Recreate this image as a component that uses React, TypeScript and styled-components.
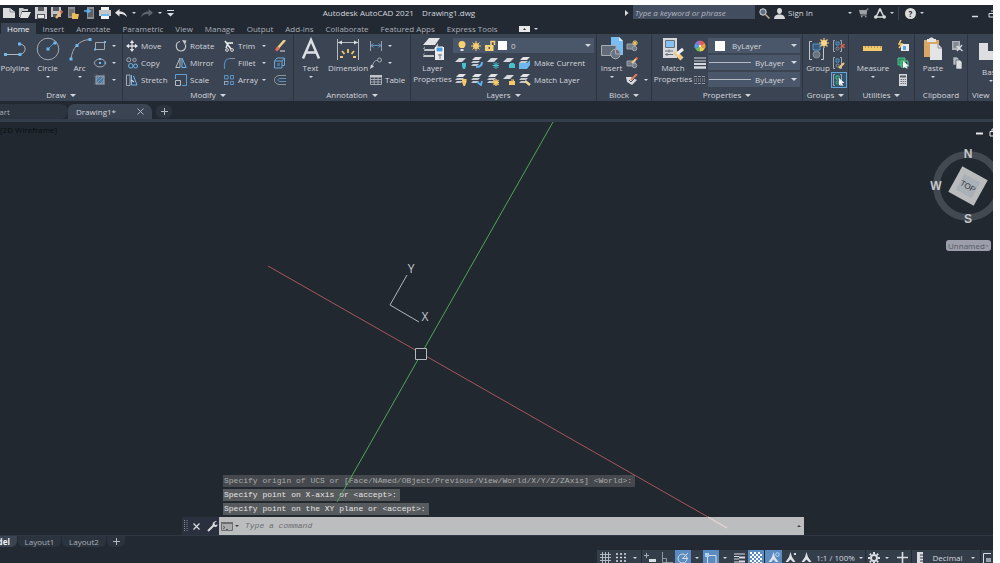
import React from "react";
import styled, { createGlobalStyle, css } from "styled-components";

const c = {
  chrome: "#222933",
  ribbon: "#3b4453",
  edge: "#2d3542",
  field: "#4a566a",
  canvas: "#212830",
  text: "#d3d7dd",
  dim: "#a9afb8",
  icon: "#d9dce0",
  blue: "#6cb8ef",
  yellow: "#f5c96a",
};

const GlobalStyle = createGlobalStyle`
  * { box-sizing: border-box; }
  body { margin: 0; background: #fff; }
  button, input, select { font: inherit; color: inherit; border: 0; margin: 0; padding: 0; background: none; border-radius: 0; outline: 0; }
  svg { display: block; flex: none; }
`;

const Page = styled.div`
  display: flex;
  min-height: 100vh;
  padding: 5px 7px 0 0;
  font: 8px/12px "Open Sans", "Noto Sans", sans-serif;
  color: ${c.text};
`;

const Window = styled.div`
  display: flex;
  flex-direction: column;
  flex: 1;
  min-width: 0;
  overflow: hidden;
  background: ${c.chrome};
`;

/* ---------- icons ---------- */

const Svg = ({ w = 12, h, vb, children }: { w?: number; h?: number; vb?: string; children: React.ReactNode }) => (
  <svg width={w} height={h ?? w} viewBox={vb ?? `0 0 ${w} ${h ?? w}`} fill="none" stroke={c.icon} strokeWidth="1" aria-hidden="true">
    {children}
  </svg>
);

const CaretSvg = styled.svg<{ $up?: boolean }>`
  ${(p) => p.$up && css`transform: rotate(180deg);`}
`;
const Caret = ({ size = 3, up }: { size?: number; up?: boolean }) => (
  <CaretSvg $up={up} width={size * 2} height={size} viewBox="0 0 6 3" aria-hidden="true">
    <path d="M0 0H6L3 3Z" fill="currentColor" />
  </CaretSvg>
);

const NewIcon = () => (
  <Svg>
    <path d="M0 1H7L12 5V11H0Z" fill="#dcdcdc" stroke="none" />
    <path d="M7 1V5H12" stroke="#8d9096" />
  </Svg>
);
const OpenIcon = () => (
  <Svg>
    <path d="M0 1H4L5 2H9V4H3L1 10H0Z" fill="#c9cacc" stroke="none" />
    <path d="M3 5H12L9 11H1Z" fill="#e2e2e2" stroke="none" />
  </Svg>
);
const SaveIcon = () => (
  <Svg>
    <path d="M0 0H12V12H0Z" fill="#cfd0d2" stroke="none" />
    <path d="M3 0H9V4H3ZM2 7H10V12H2Z" fill="#53585f" stroke="none" />
    <path d="M3 8H9V11H3Z" fill="#e8e8e8" stroke="none" />
  </Svg>
);
const SaveAsIcon = () => (
  <Svg>
    <path d="M0 0H10V10H0Z" fill="#bfc1c4" stroke="none" />
    <path d="M2 0H8V4H2ZM2 7H6V10H2Z" fill="#53585f" stroke="none" />
    <path d="M5 11L11 4" stroke="#eebc72" strokeWidth="2.4" />
    <path d="M9.500 5.500L11 4" stroke="#e05b4b" strokeWidth="2.4" />
  </Svg>
);
const DeviceOpenIcon = () => (
  <Svg>
    <path d="M1 0H8V11H1Z" fill="#8b8d90" stroke="none" />
    <path d="M2 2H7V9H2Z" fill="#6d6f73" stroke="none" />
    <path d="M5 6H8L9 7H12L11 12H5Z" fill="#eebc55" stroke="none" />
  </Svg>
);
const DeviceSaveIcon = () => (
  <Svg>
    <path d="M4 0H11V12H4Z" fill="#8b8d90" stroke="none" />
    <path d="M5 2H10V10H5Z" fill="#5d6066" stroke="none" />
    <path d="M1 4H6M4 2L7 4L4 6" stroke="#5db3ef" strokeWidth="1.600" />
  </Svg>
);
const PrintIcon = () => (
  <Svg>
    <path d="M2 0H10V4H2Z" fill="#f3f3f3" stroke="none" />
    <path d="M0 3H12V9H0Z" fill="#c3c5c8" stroke="none" />
    <path d="M2 7H10V9H2Z" fill="#6cb8ef" stroke="none" />
    <path d="M2 9H10V12H2Z" fill="#f3f3f3" stroke="none" />
  </Svg>
);
const UndoIcon = () => (
  <Svg w={12} h={10}>
    <path d="M4.500 1V3.500C8 3.500 11 5 12 9C9.500 6.500 7.500 6 4.500 6V8.500L0 4.800Z" fill="#e4e4e4" stroke="none" />
  </Svg>
);
const RedoIcon = () => (
  <Svg w={12} h={10}>
    <path d="M7.500 1V3.500C4 3.500 1 5 0 9C2.500 6.500 4.500 6 7.500 6V8.500L12 4.800Z" fill="#5d646f" stroke="none" />
  </Svg>
);
const CustomizeIcon = () => (
  <Svg w={7} h={7}>
    <path d="M0 .5H7" />
    <path d="M0 3H7L3.500 6.500Z" fill={c.icon} stroke="none" />
  </Svg>
);
const SearchIcon = () => (
  <Svg w={11}>
    <circle cx="4" cy="4" r="3.200" fill="#5f6e80" />
    <path d="M6.500 6.500L10.500 10.500" strokeWidth="1.500" stroke="#c2a98d" />
  </Svg>
);
const UserIcon = () => (
  <Svg w={11}>
    <path d="M5.500 0C7.500 0 8 1.500 8 3S7 6 5.500 6S3 4.500 3 3S3.500 0 5.500 0ZM0 11C0 8 2 7 4 6.500H7C9 7 11 8 11 11Z" fill="#d9d9d9" stroke="none" />
  </Svg>
);
const CartIcon = () => (
  <Svg w={10}>
    <path d="M9.500 1H8L7 7H1.500" stroke="#9da1a7" />
    <path d="M0 2H7.500L7 6H1Z" fill="#9da1a7" stroke="none" />
    <path d="M2 8.500H3.500M6 8.500H7.500" strokeWidth="1.500" stroke="#9da1a7" />
  </Svg>
);
const AutodeskIcon = () => (
  <Svg w={12} h={11}>
    <path d="M6 1L10 9H2Z" strokeWidth="1.500" />
    <circle cx="6" cy="2" r="1.500" fill={c.icon} stroke="none" />
    <circle cx="1.700" cy="9" r="1.700" fill={c.icon} stroke="none" />
    <circle cx="10.300" cy="9" r="1.700" fill={c.icon} stroke="none" />
  </Svg>
);

const PolylineIcon = () => (
  <Svg w={24}>
    <path d="M2 17.500H17C24 16 24 7 16 7" stroke="#b4b8bf" />
    <path d="M1 16h3v3H1ZM15.500 16h3v3h-3ZM15 5.500h3v3h-3Z" fill={c.blue} stroke="none" />
  </Svg>
);
const CircleIcon = () => (
  <Svg w={24}>
    <circle cx="12" cy="12" r="10.800" stroke="#a4a9b1" />
    <path d="M12 12L19 5" stroke="#4f9bd8" />
    <path d="M10.500 10.500h3v3h-3ZM17.500 4.500h3v3h-3Z" fill={c.blue} stroke="none" />
  </Svg>
);
const ArcIcon = () => (
  <Svg w={24}>
    <path d="M3 22C4 12 10 3 22 2.500" stroke="#a4a9b1" />
    <path d="M1.500 20.500h3v3h-3ZM7.500 7h3v3h-3ZM20.500 1h3v3h-3Z" fill={c.blue} stroke="none" />
  </Svg>
);
const RectIcon = () => (
  <Svg>
    <path d="M1.500 2.500H10.500V9.500H1.500Z" stroke="#a4a9b1" />
    <path d="M0 8.500h2v2H0ZM10 1h2v2h-2Z" fill={c.blue} stroke="none" />
  </Svg>
);
const EllipseIcon = () => (
  <Svg>
    <ellipse cx="6" cy="6" rx="5.500" ry="4" stroke="#a4a9b1" />
    <path d="M5 5h2v2H5ZM10.500 5h1.500v2h-1.500ZM5 1h2v2H5Z" fill={c.blue} stroke="none" />
  </Svg>
);
const HatchIcon = () => (
  <Svg>
    <path d="M2 2H10V10H2Z" fill="#53779b" stroke="#a4a9b1" />
    <path d="M2 6L6 2M2 10L10 2M6 10L10 6" stroke="#7fa9cf" strokeWidth=".7" />
    <path d="M0 2H12M0 10H12M2 0V12M10 0V12" stroke="#8b919a" strokeWidth=".6" strokeDasharray="1 1" />
  </Svg>
);
const MoveIcon = () => (
  <Svg>
    <path d="M6 2V10M2 6H10" strokeWidth="1.300" />
    <path d="M6 0L8.200 3H3.800ZM6 12L8.200 9H3.800ZM0 6L3 3.800V8.200ZM12 6L9 3.800V8.200Z" fill="#e4e6e9" stroke="none" />
  </Svg>
);
const CopyIcon = () => (
  <Svg>
    <circle cx="2.800" cy="2.800" r="2" stroke="#a4a9b1" />
    <circle cx="8.500" cy="3" r="1.700" stroke="#a4a9b1" />
    <circle cx="4.800" cy="8.800" r="2.300" stroke={c.blue} />
    <circle cx="9.500" cy="9" r="2" stroke={c.blue} />
  </Svg>
);
const StretchIcon = () => (
  <Svg>
    <path d="M.5 1V11.500H4V1Z" stroke="#a4a9b1" />
    <path d="M5.500 1V11H11L7.500 2" stroke={c.blue} />
    <path d="M5 6L8 8" strokeWidth="1.200" />
  </Svg>
);
const RotateIcon = () => (
  <Svg>
    <path d="M5 1.500C0 2.500 0 10 5.500 11C9 11 11.500 8.500 10.500 4.500" stroke="#c3c6cb" strokeWidth="1.200" />
    <path d="M7 0L11.500 .5L10 5Z" fill="#c3c6cb" stroke="none" />
  </Svg>
);
const MirrorIcon = () => (
  <Svg>
    <path d="M5 1V10.500H.8Z" stroke="#b6bac1" />
    <path d="M7 1V10.500H11.200Z" stroke={c.blue} />
  </Svg>
);
const ScaleIcon = () => (
  <Svg>
    <path d="M.5 5V.5H11.500V11.500H7" stroke="#5b9fd4" />
    <path d="M.5 6.500H5.500V11.500H.5Z" stroke="#b6bac1" />
  </Svg>
);
const TrimIcon = () => (
  <Svg>
    <path d="M2 1L8 9M10 3H5L3 8" strokeWidth="1.600" stroke="#e8eaec" />
    <circle cx="4" cy="10" r="1.400" />
    <circle cx="9" cy="10" r="1.400" />
    <path d="M7 3.500H11" strokeDasharray="1 1" />
  </Svg>
);
const FilletIcon = () => (
  <Svg>
    <path d="M1.500 12V7C2 3 4 1.500 7 1.500" stroke="#4f8cc0" strokeWidth="1.200" />
    <path d="M7 1.500H12" stroke="#8e949d" />
  </Svg>
);
const ArrayIcon = () => (
  <Svg>
    <path d="M1.500 1.500h3.500v3.500H1.500ZM7.500 1.500h3v3.500h-3ZM1.500 7.500h3.500v3H1.500ZM7.500 7.500h3v3h-3Z" stroke="#5d94c6" />
    <path d="M1 7.500h4.500M1.500 7v4" stroke="#9aa6b5" />
  </Svg>
);
const EraseIcon = () => (
  <Svg>
    <path d="M3 9L11 0" stroke="#f1d08e" strokeWidth="2.500" />
    <path d="M2 10.500L5 7.500" stroke="#e4685a" strokeWidth="3" />
    <path d="M6 11H11" stroke="#dfe2e5" />
  </Svg>
);
const ExplodeIcon = () => (
  <Svg>
    <path d="M.5 4H8V11H.5ZM3 1H10.500V8.500H8M.5 4L3 1M8 4L10.500 1" stroke="#6fa6d6" />
    <path d="M3 6H6V9H3Z" fill="#4a7099" stroke="none" />
  </Svg>
);
const OffsetIcon = () => (
  <Svg>
    <path d="M12 1.500H5C-1 2 -1 10 5 10.500H12" stroke="#8e949d" />
    <path d="M12 4.500H6C3.500 4.500 3.500 7.500 6 7.500H12" stroke="#5d94c6" />
  </Svg>
);
const TextIcon = () => (
  <Svg w={24}>
    <path d="M4 21.500L12 3L20 21.500M7 15.500H17" stroke="#dcdfe3" strokeWidth="2.500" />
  </Svg>
);
const DimensionIcon = () => (
  <Svg w={24}>
    <path d="M1.500 2V23M22.500 2V23M2 5.500H22" stroke="#b4b8bf" />
    <path d="M2 5.500L6 3.500V7.500ZM22 5.500L18 3.500V7.500Z" fill="#d9dce0" stroke="none" />
    <path d="M12 16V12M8.500 17L6 14M15.500 17L18 14M7 20H4M17 20H20" stroke={c.yellow} strokeWidth="1.800" />
  </Svg>
);
const LinearIcon = () => (
  <Svg>
    <path d="M.5 1V11M11.500 1V11" stroke="#9aa1ab" />
    <path d="M1 5.500H11M3.500 3.500L1 5.500L3.500 7.500M8.500 3.500L11 5.500L8.500 7.500" stroke="#5d94c6" />
  </Svg>
);
const LeaderIcon = () => (
  <Svg>
    <circle cx="9.500" cy="3" r="2" stroke="#a4a9b1" />
    <path d="M7.500 3.500C4 3 4 6 2 9" stroke="#a4a9b1" />
    <path d="M0 12L1 7.500L4 9.500Z" fill="#cfd2d6" stroke="none" />
  </Svg>
);
const TableIcon = () => (
  <Svg>
    <path d="M0 1H12V3.500H0Z" fill="#c3c6cb" stroke="none" />
    <path d="M.5 3V10.500H11.500V3M0 5.500H12M0 8H12M4.200 3V11M8 3V11" stroke="#a4a9b1" />
  </Svg>
);

const stack = (
  <>
    <path d="M4 0H11L8 3H1Z" fill="#e1e3e5" stroke="none" />
    <path d="M2 4H9L7 6H0ZM2 7H8L6 9H0Z" fill="#c5c8cc" stroke="none" />
  </>
);
const LayerIcon = () => (
  <Svg w={24}>
    <path d="M8 1H19L14 8H2Z" fill="#e1e3e5" stroke="none" />
    <path d="M4 9L2 12H13L17 6V9L13 14H3ZM4 15L2 18H13V20H2Z" fill="#c3c6ca" stroke="none" />
    <path d="M14 10H23V23H14Z" fill="#e8eaec" stroke="none" />
    <path d="M15 10H22V15H15Z" fill="#4c9be0" stroke="#fff" />
    <path d="M17 18H21M19 17V22" stroke="#777d86" />
  </Svg>
);
const LayerToolIcon = ({ kind }: { kind: string }) => (
  <Svg>
    {["off", "freeze", "lock", "unlock"].includes(kind) ? <path d="M4 1H11L7 5H0Z" fill="#d5d8db" stroke="none" /> : stack}
    {kind === "off" && <path d="M7 6H11V9L10 12H8L7 9Z" fill="#46c1cd" stroke="none" />}
    {kind === "freeze" && <path d="M9 5V12M5.500 8.500H12M6.500 6L11.500 11M11.500 6L6.500 11" stroke="#46c1cd" />}
    {kind === "lock" && <path d="M7 7V6H11V7H12V11H6V7Z" fill="#46c1cd" stroke="none" />}
    {kind === "unlock" && <path d="M8 5.500H11V7H12V11H6V7H10V6.500H8Z" fill={c.yellow} stroke="none" />}
    {kind === "on" && <path d="M7 5H11.500V8L10 12H8.500L7 8Z" fill={c.yellow} stroke="none" />}
    {kind === "thaw" && <path d="M9 5V12M5.500 8.500H12M6.500 6L11.500 11M11.500 6L6.500 11" stroke={c.yellow} strokeWidth="1.300" />}
    {kind === "iso" && <path d="M5 10C9 10 11 8 11 5" stroke="#5fb0ee" strokeWidth="2" />}
    {kind === "walk" && <path d="M6 8L10 11L11 7" stroke="#5fb0ee" strokeWidth="1.800" />}
    {kind === "current" && <path d="M0 6H8L11 3V8L8 12H0Z" fill="#6cb8ef" stroke="none" />}
    {kind === "match" && <path d="M6 7L11 11" stroke="#f0d49a" strokeWidth="2.500" />}
  </Svg>
);
const BulbIcon = () => (
  <Svg>
    <path d="M6 1C8.500 1 9.500 2.500 9.500 4.500S8 7 8 8H4C4 7 2.500 6.500 2.500 4.500S3.500 1 6 1Z" fill="#f8d271" stroke="none" />
    <path d="M4.500 9H7.500V11H4.500Z" fill="#dfe3e8" stroke="none" />
  </Svg>
);
const SunIcon = () => (
  <Svg>
    <circle cx="6" cy="6" r="3" fill="#f8d271" stroke="none" />
    <path d="M6 1V11M1 6H11M2.500 2.500L9.500 9.500M9.500 2.500L2.500 9.500" stroke={c.yellow} />
  </Svg>
);
const UnlockIcon = () => (
  <Svg>
    <path d="M7 5V1.500H10.500V5" stroke="#f8d271" strokeWidth="1.500" />
    <path d="M1 5H9.500V11H1Z" fill="#f8d271" stroke="none" />
    <path d="M4.500 7H6V9H4.500Z" fill="#4a566a" stroke="none" />
  </Svg>
);
const InsertIcon = () => (
  <Svg w={24}>
    <path d="M11 0H19L23 4V18H11Z" fill="#79bdf2" stroke="none" />
    <path d="M19 0V4H23" fill="#d5e9f9" stroke="none" />
    <path d="M1.500 8.500H16V18.500H1.500Z" fill="#626b78" stroke="#a8adb5" />
    <circle cx="15.500" cy="17" r="4.800" fill="#69727f" stroke="#a8adb5" />
    <path d="M15.500 12.500V17H20" stroke="#a8adb5" />
  </Svg>
);
const BlockToolIcon = ({ kind }: { kind: string }) => (
  <Svg>
    {kind === "attr" ? (
      <>
        <path d="M0 3H5L11 6L6 11L1 8Z" fill="#d8dadd" stroke="none" />
        <path d="M5 6L11 0" stroke="#e37a62" strokeWidth="2" />
        <path d="M3 6L5 8L9 4" stroke="#4c5563" />
      </>
    ) : (
      <>
        <path d="M1 4H9V9H1Z" fill="#767e8a" stroke="#9ba1aa" />
        <circle cx="8.500" cy="8.500" r="2.300" fill="#737b87" stroke="#9ba1aa" />
        {kind === "create" ? (
          <path d="M9 0V6M6 3H12M7 1L11 5M11 1L7 5" stroke={c.yellow} />
        ) : (
          <>
            <path d="M6 6L11 1" stroke="#efc981" strokeWidth="2" />
            <path d="M10 2L11.500 .5" stroke="#e05b4b" strokeWidth="2" />
          </>
        )}
      </>
    )}
  </Svg>
);
const MatchIcon = () => (
  <Svg w={24}>
    <path d="M2 1H16V21H2Z" fill="#d7d9dc" stroke="none" />
    <path d="M4.500 3.500H13.500V10.500H4.500Z" fill="#86c2f2" stroke="#6a7079" />
    <path d="M4 14H12M4 17.500H12M8 12.500V15.500M6 16V19" stroke="#6a7079" />
    <path d="M14 15L21 22" stroke="#f0cb85" strokeWidth="4.500" />
    <path d="M16 17L22 12" stroke="#eceef0" strokeWidth="3" />
  </Svg>
);
const ColorWheelIcon = () => (
  <Svg>
    {["#e9604f", "#f19a3e", "#f2d14b", "#6ac069", "#4aa3e0", "#9a6fd0"].map((fill, i) => (
      <path key={fill} d="M6 6L3.200 1.200A5.600 5.600 0 0 1 8.800 1.200Z" fill={fill} stroke="none" transform={`rotate(${i * 60 + 30} 6 6)`} />
    ))}
    <circle cx="6" cy="6" r="1.200" fill="#e8e8e8" stroke="none" />
  </Svg>
);
const WeightIcon = () => (
  <Svg>
    <path d="M0 1H12M0 4H12" stroke="#d5d8dc" />
    <path d="M0 7H12" stroke="#d5d8dc" strokeWidth="2" />
    <path d="M0 10.500H12" stroke="#d5d8dc" strokeWidth="2.500" />
  </Svg>
);
const LinetypeIcon = () => (
  <Svg>
    <path d="M0 2.500H12M0 9.500H12" strokeDasharray="3 1" stroke="#9197a1" />
    <path d="M0 5H12M0 7H12" strokeDasharray="1 1" stroke="#9197a1" />
  </Svg>
);
const GroupIcon = () => (
  <Svg w={24}>
    <path d="M6 4.500H3.500V22.500H6M15 22.500H17.500V11" stroke="#c3c6cb" />
    <path d="M7 7H14V13H7Z" stroke="#4f9bd8" fill="#3c5878" />
    <circle cx="10.500" cy="17.500" r="3.500" fill="#69727f" stroke="#8e949d" />
    <path d="M18 1V11M13 6H23M14.500 2.500L21.500 9.500M21.500 2.500L14.500 9.500" stroke="#f2cc7d" strokeWidth="1.200" />
    <circle cx="18" cy="6" r="3" fill="#f8d68a" stroke="none" />
  </Svg>
);
const GroupToolIcon = ({ kind }: { kind: string }) => (
  <Svg>
    <path d="M2 .5H.5V11.500H2M7 .5H8.500V11.500H7" stroke="#a4a9b1" />
    <path d="M3 2H6V5H3Z" stroke={kind === "select" ? "#4fbf86" : "#4f9bd8"} />
    <circle cx="4.500" cy="8.500" r="1.500" stroke={kind === "select" ? "#4fbf86" : "#8e949d"} />
    {kind === "ungroup" && <path d="M7.500 4L11.500 8M11.500 4L7.500 8" stroke="#e2604f" strokeWidth="1.400" />}
    {kind === "edit" && <path d="M6 11L11 6" stroke="#efc981" strokeWidth="2" />}
    {kind === "select" && <path d="M6 4L11.500 9L9 9L10.500 12L7.500 10.500L6 11.500Z" fill="#f4f5f6" stroke="none" />}
  </Svg>
);
const MeasureIcon = () => (
  <Svg w={24}>
    <path d="M2 9H21V14H2Z" fill="#f2ca6b" stroke="none" />
    <path d="M4.500 9V11M7.500 9V11M10.500 9V11M13.500 9V11M16.500 9V11M19.500 9V11" stroke="#b3965a" />
  </Svg>
);
const QuickSelectIcon = () => (
  <Svg>
    <path d="M4 4H12V11H4Z" fill="#e7e9eb" stroke="none" />
    <path d="M6 6H9V10H6Z" fill="#5aa6e6" stroke="none" />
    <path d="M4 0L2 4H5L2 8" stroke={c.yellow} strokeWidth="1.500" />
  </Svg>
);
const SelectAllIcon = () => (
  <Svg>
    <path d="M1 1H8V8H1Z" fill="#2f8f62" stroke="#4fbf86" />
    <path d="M4 4H11V10H4Z" stroke="#5fd096" />
    <path d="M6 4L12 9H9.500L10.500 12L7.500 10L6 11Z" fill="#f4f5f6" stroke="none" />
  </Svg>
);
const CalculatorIcon = () => (
  <Svg>
    <path d="M2 0H10V12H2Z" fill="#d5d7da" stroke="none" />
    <path d="M3 1.500H9V3.500H3Z" fill="#535b67" stroke="none" />
    <path d="M3.500 5.500H9M3.500 7.500H9M3.500 9.500H9" stroke="#6a717c" strokeDasharray="1.500 .700" />
  </Svg>
);
const PasteIcon = () => (
  <Svg w={24}>
    <path d="M3 3H18V20H3Z" fill="#d8a666" stroke="none" />
    <path d="M6 2H8C9 0 12 0 13 2H15V5H6Z" fill="#e3e4e6" stroke="none" />
    <path d="M9 7H17L21 11V23H9Z" fill="#e3e4e6" stroke="none" />
    <path d="M17 7V11H21" stroke="#8d9096" />
  </Svg>
);
const CutIcon = () => (
  <Svg>
    <path d="M1 1H9V10H1Z" fill="#aeb2b8" stroke="none" />
    <path d="M2.500 3H7.500M2.500 5H7.500M2.500 7H5" stroke="#5a616c" />
    <path d="M6 11L11 5M6 6L11.500 11" strokeWidth="1.300" />
  </Svg>
);
const CopyClipIcon = () => (
  <Svg>
    <path d="M2 0H6L8 2V8H2Z" fill="#b6b9be" stroke="#3b4453" strokeWidth=".6" />
    <path d="M5 3H9L11 5V12H5Z" fill="#dcdee1" stroke="#3b4453" strokeWidth=".6" />
  </Svg>
);
const BaseIcon = () => (
  <Svg w={24} h={28}>
    <path d="M0 6H9V14H24V23H0Z" fill="#dcdee1" stroke="none" />
  </Svg>
);

/* ---------- title bar ---------- */

const TitleBar = styled.header`
  display: flex;
  align-items: center;
  height: 16px;
`;
const QuickAccess = styled.div`
  display: flex;
  align-items: center;
  gap: 4px;
  padding-left: 3px;
`;
const IconButton = styled.button<{ $w?: number }>`
  display: flex;
  align-items: center;
  justify-content: center;
  width: ${(p) => p.$w ?? 12}px;
  height: 14px;
`;
const Title = styled.h1`
  flex: 1;
  margin: 0;
  text-align: center;
  font-size: 8px;
  font-weight: 400;
  white-space: pre;
`;
const SearchField = styled.input`
  width: 122px;
  height: 14px;
  margin: 0 3px 2px 4px;
  padding: 0 2px;
  background: #434d60;
  font-style: italic;
  &::placeholder { color: #b4b9c2; opacity: 1; }
`;
const Account = styled.button`
  display: flex;
  align-items: center;
  gap: 3px;
  width: 78px;
  margin-left: 4px;
  margin-right: 2px;
  white-space: nowrap;
  & > :last-child { margin-left: auto; }
`;
const TitleTools = styled.div`
  display: flex;
  align-items: center;
  gap: 4px;
  width: 139px;
  padding-left: 4px;
`;
const Divider = styled.span`
  width: 1px;
  height: 13px;
  background: #3a424e;
`;
const Help = styled.button`
  width: 11px;
  height: 11px;
  margin-left: 2px;
  border-radius: 50%;
  background: #dcdcdc;
  color: #222933;
  font-weight: 700;
  line-height: 11px;
`;
const WindowButtons = styled.div`
  display: flex;
  align-items: center;
  gap: 10px;
  margin-left: auto;
  overflow: hidden;
`;

/* ---------- ribbon ---------- */

const RibbonTabs = styled.nav`
  display: flex;
  align-items: stretch;
  height: 13px;
  padding: 2px 0 0 1px;
`;
const RibbonTab = styled.button<{ $active?: boolean }>`
  padding: 0 6px;
  margin-right: ${(p) => (p.$active ? 1 : 0)}px;
  color: ${(p) => (p.$active ? "#f0f2f4" : c.dim)};
  background: ${(p) => (p.$active ? c.ribbon : "none")};
  line-height: 11px;
  white-space: nowrap;
`;
const RibbonToggle = styled.button`
  display: flex;
  align-items: center;
  gap: 4px;
  margin-left: 15px;
`;
const Ribbon = styled.div`
  display: flex;
  height: 67px;
  background: ${c.ribbon};
  overflow: hidden;
`;
const Panel = styled.section<{ $w: number }>`
  display: flex;
  flex-direction: column;
  flex: none;
  width: ${(p) => p.$w}px;
  padding-top: 3px;
  border-right: 1px solid ${c.edge};
  white-space: nowrap;
`;
const PanelBody = styled.div<{ $pad?: number; $gap?: number }>`
  display: flex;
  align-items: flex-start;
  gap: ${(p) => p.$gap ?? 0}px;
  height: 51px;
  padding-left: ${(p) => p.$pad ?? 3}px;
`;
const PanelFooter = styled.button<{ $start?: boolean }>`
  display: flex;
  align-items: center;
  justify-content: ${(p) => (p.$start ? "flex-start" : "center")};
  gap: 4px;
  height: 13px;
  padding: 1px 4px 0;
`;
const BigTool = styled.button<{ $w: number }>`
  display: flex;
  flex-direction: column;
  align-items: center;
  flex: none;
  width: ${(p) => p.$w}px;
  line-height: 11px;
  & > svg:first-child { margin-bottom: 1px; }
  & > svg:last-child:not(:first-child) { margin-top: 3px; }
`;
const Stack = styled.div<{ $w?: number; $indent?: boolean }>`
  display: flex;
  flex-direction: column;
  flex: none;
  width: ${(p) => (p.$w ? `${p.$w}px` : "auto")};
  padding-left: ${(p) => (p.$indent ? 8 : 0)}px;
`;
const Row = styled.div`
  display: flex;
  align-items: center;
  gap: 4px;
  height: 17px;
`;
const LayerRow = styled(Row)`
  padding-left: 2px;
`;
const PropertyRow = styled(Row)`
  gap: 2px;
`;
const FullRow = styled(Row)`
  & > button { flex: 1; }
`;
const Tool = styled.button<{ $active?: boolean }>`
  display: flex;
  align-items: center;
  gap: 3px;
  ${(p) =>
    p.$active &&
    css`
      margin: 0 -2px;
      padding: 1px;
      border: 1px solid #62a6dd;
      background: #35546f;
    `}
  & > svg + svg { margin-left: 3px; }
  & > span + svg { margin-left: auto; }
`;
const Combo = styled.label<{ $w: number }>`
  display: flex;
  align-items: center;
  gap: 2px;
  width: ${(p) => p.$w}px;
  height: 15px;
  padding: 0 3px;
  background: ${c.field};
  & > select { flex: 1; min-width: 0; padding-left: 2px; appearance: none; line-height: 12px; }
`;
const Swatch = styled.span`
  width: 10px;
  height: 10px;
  margin: 0 3px 0 4px;
  background: #fff;
`;
const Stroke = styled.span`
  width: 42px;
  height: 1px;
  margin-left: -2px;
  background: #b4bac4;
`;

type BigProps = { w: number; icon: React.ReactNode; label: string; sub?: string; caret?: boolean };
const Big = ({ w, icon, label, sub, caret }: BigProps) => (
  <BigTool $w={w}>
    {icon}
    <span>{label}</span>
    {sub && <span>{sub}</span>}
    {caret && <Caret size={2} />}
  </BigTool>
);
const Small = ({ icon, label, caret }: { icon: React.ReactNode; label?: string; caret?: boolean }) => (
  <Tool>
    {icon}
    {label && <span>{label}</span>}
    {caret && <Caret size={2} />}
  </Tool>
);
const Footer = ({ label, plain, start }: { label: string; plain?: boolean; start?: boolean }) => (
  <PanelFooter $start={start}>
    {label}
    {!plain && <Caret size={3} />}
  </PanelFooter>
);
const PropertyCombo = ({ name, mark }: { name: string; mark: React.ReactNode }) => (
  <Combo $w={92}>
    {mark}
    <select aria-label={name}><option>ByLayer</option></select>
    <Caret />
  </Combo>
);

/* ---------- document tabs ---------- */

const DocTabs = styled.nav`
  display: flex;
  align-items: flex-end;
  height: 21px;
  padding-top: 3px;
  border-bottom: 3px solid #343d4b;
`;
const DocTab = styled.button<{ $active?: boolean; $w: number }>`
  display: flex;
  align-items: center;
  justify-content: space-between;
  width: ${(p) => p.$w}px;
  height: 15px;
  padding: 0 8px;
  border-radius: 6px 8px 0 0;
  background: ${(p) => (p.$active ? c.ribbon : "#2c343f")};
  color: ${(p) => (p.$active ? c.text : c.dim)};
  &:first-child { margin-left: -16px; border-radius: 0 8px 8px 0; }
`;
const AddTab = styled.button`
  display: flex;
  align-items: center;
  justify-content: center;
  width: 16px;
  height: 13px;
  margin: 0 0 1px 4px;
  border-radius: 6px;
  background: #2c343f;
`;
const Plus = () => (
  <Svg w={7}>
    <path d="M3.500 0V7M0 3.500H7" stroke="#b4b8bf" />
  </Svg>
);

/* ---------- drawing area ---------- */

const Canvas = styled.main`
  position: relative;
  display: flex;
  flex-direction: column;
  justify-content: flex-end;
  flex: 1;
  min-height: 413px;
  background: ${c.canvas};
  overflow: hidden;
`;
const ViewLabel = styled.button`
  position: absolute;
  left: 0;
  top: 2px;
  color: #0c0f13;
`;
const Drawing = styled.svg`
  position: absolute;
  left: 0;
  top: 0;
  width: 100%;
  height: 100%;
  pointer-events: none;
`;
const ViewTools = styled.div`
  position: absolute;
  right: 0;
  top: 4px;
  display: flex;
  flex-direction: column;
  align-items: flex-end;
`;
const UcsMenu = styled.button`
  display: flex;
  align-items: center;
  justify-content: space-between;
  width: 45px;
  height: 11px;
  margin: 10px 2px 0 0;
  padding: 0 2px 0 2px;
  border-radius: 3px;
  background: #9c9eab;
  color: #555967;
  line-height: 10px;
  & > svg { opacity: 0.4; }
`;
const CommandArea = styled.div`
  display: flex;
  flex-direction: column;
  align-items: flex-start;
  gap: 2px;
  width: 622px;
  margin-left: 182px;
  font: 8px/12px "Liberation Mono", monospace;
`;
const History = styled.p<{ $old?: boolean }>`
  margin: 0 0 0 41px;
  padding: 0 3px 0 1px;
  background: ${(p) => (p.$old ? "#45494d" : "#585b5e")};
  color: ${(p) => (p.$old ? "#a9acaf" : "#e4e5e6")};
`;
const CommandRow = styled.div`
  display: flex;
  width: 100%;
  height: 18px;
`;
const CommandGrip = styled.div`
  display: flex;
  align-items: center;
  gap: 5px;
  width: 37px;
  padding-left: 2px;
  background: #2a303d;
`;
const CommandBox = styled.label`
  display: flex;
  align-items: center;
  gap: 2px;
  flex: 1;
  padding: 0 3px 0 2px;
  background: #bcbdbe;
  color: #3d4146;
`;
const CommandInput = styled.input`
  flex: 1;
  min-width: 0;
  padding-left: 4px;
  font-style: italic;
  &::placeholder { color: #6c6f73; opacity: 1; }
`;

/* ---------- bottom bars ---------- */

const LayoutTabs = styled.nav`
  display: flex;
  height: 15px;
  padding-bottom: 3px;
  border-top: 1px solid #2f3743;
`;
const LayoutTab = styled.button<{ $active?: boolean; $w: number }>`
  display: flex;
  align-items: center;
  justify-content: center;
  width: ${(p) => p.$w}px;
  margin-right: 1px;
  border-radius: 0 0 6px 6px;
  background: ${(p) => (p.$active ? c.ribbon : "#2b333e")};
  color: ${(p) => (p.$active ? "#f0f2f4" : c.dim)};
  font-weight: ${(p) => (p.$active ? 700 : 400)};
  line-height: 11px;
  &:first-child { margin-left: -20px; padding-right: 2px; }
`;
const StatusBar = styled.footer`
  display: flex;
  justify-content: flex-end;
  height: 13px;
  overflow: hidden;
`;
const StatusGroup = styled.div`
  display: flex;
  margin-left: 1px;
  background: #343d4a;
`;
const StatusButton = styled.button<{ $w: number; $active?: boolean }>`
  display: flex;
  align-items: center;
  justify-content: center;
  gap: 4px;
  width: ${(p) => p.$w}px;
  height: 15px;
  flex: none;
  background: ${(p) => (p.$active ? "#5a8cc2" : "none")};
  white-space: nowrap;
`;

const Person = () => <path d="M5.500 0L7 5L10.500 10H8L5.500 7.500L3 10H.5L4 5Z" fill="#dfe2e6" stroke="none" />;
const checks = [0, 1, 2, 3, 4, 5].flatMap((y) => [0, 1, 2, 3, 4, 5].filter((x) => (x + y) % 2 === 0).map((x) => [x, y]));
const tabs = ["Home", "Insert", "Annotate", "Parametric", "View", "Manage", "Output", "Add-ins", "Collaborate", "Featured Apps", "Express Tools"];

export default function App() {
  return (
    <>
      <GlobalStyle />
      <Page>
        <Window>
          <TitleBar>
            <QuickAccess>
              <IconButton aria-label="New"><NewIcon /></IconButton>
              <IconButton aria-label="Open"><OpenIcon /></IconButton>
              <IconButton aria-label="Save"><SaveIcon /></IconButton>
              <IconButton aria-label="Save As"><SaveAsIcon /></IconButton>
              <IconButton aria-label="Open from device"><DeviceOpenIcon /></IconButton>
              <IconButton aria-label="Save to device"><DeviceSaveIcon /></IconButton>
              <IconButton aria-label="Plot"><PrintIcon /></IconButton>
              <IconButton aria-label="Undo"><UndoIcon /></IconButton>
              <IconButton aria-label="Undo list" $w={6}><Caret size={2} /></IconButton>
              <IconButton aria-label="Redo"><RedoIcon /></IconButton>
              <IconButton aria-label="Redo list" $w={6}><Caret size={2} /></IconButton>
              <IconButton aria-label="Customize" $w={6}><CustomizeIcon /></IconButton>
            </QuickAccess>
            <Title>{"Autodesk AutoCAD 2021    Drawing1.dwg"}</Title>
            <Svg w={4} h={6}><path d="M0 0L3.500 3L0 6Z" fill={c.icon} stroke="none" /></Svg>
            <SearchField aria-label="Search" placeholder="Type a keyword or phrase" />
            <IconButton aria-label="Search"><SearchIcon /></IconButton>
            <Account><UserIcon /><span>Sign In</span><Caret size={2} /></Account>
            <TitleTools>
              <IconButton aria-label="Cart"><CartIcon /></IconButton>
              <IconButton aria-label="App store"><AutodeskIcon /></IconButton>
              <Caret size={2} />
              <Divider />
              <Help>?</Help>
              <Caret size={2} />
              <WindowButtons>
                <Svg w={6} h={10}><path d="M0 8.500H6" strokeWidth="1.500" /></Svg>
                <Svg w={5} h={10}><path d="M1 5.500H8V9H1ZM3 3H9" /></Svg>
              </WindowButtons>
            </TitleTools>
          </TitleBar>

          <RibbonTabs>
            {tabs.map((t, i) => (
              <RibbonTab key={t} $active={i === 0}>{t}</RibbonTab>
            ))}
            <RibbonToggle aria-label="Minimize ribbon">
              <Svg w={11} h={6}>
                <path d="M0 0H11V6H0Z" fill="#e8e8e8" stroke="none" />
                <path d="M4 4L5.500 2L7 4Z" fill="#333" stroke="none" />
              </Svg>
              <Caret size={2} />
            </RibbonToggle>
          </RibbonTabs>

          <Ribbon>
            <Panel $w={123}>
              <PanelBody $pad={0}>
                <Big w={30} icon={<PolylineIcon />} label="Polyline" />
                <Big w={35} icon={<CircleIcon />} label="Circle" caret />
                <Big w={29} icon={<ArcIcon />} label="Arc" caret />
                <Stack>
                  <Row><Small icon={<RectIcon />} caret /></Row>
                  <Row><Small icon={<EllipseIcon />} caret /></Row>
                  <Row><Small icon={<HatchIcon />} caret /></Row>
                </Stack>
              </PanelBody>
              <Footer label="Draw" />
            </Panel>
            <Panel $w={171}>
              <PanelBody>
                <Stack $w={49}>
                  <Row><Small icon={<MoveIcon />} label="Move" /></Row>
                  <Row><Small icon={<CopyIcon />} label="Copy" /></Row>
                  <Row><Small icon={<StretchIcon />} label="Stretch" /></Row>
                </Stack>
                <Stack $w={48}>
                  <Row><Small icon={<RotateIcon />} label="Rotate" /></Row>
                  <Row><Small icon={<MirrorIcon />} label="Mirror" /></Row>
                  <Row><Small icon={<ScaleIcon />} label="Scale" /></Row>
                </Stack>
                <Stack $w={43}>
                  <FullRow><Small icon={<TrimIcon />} label="Trim" caret /></FullRow>
                  <FullRow><Small icon={<FilletIcon />} label="Fillet" caret /></FullRow>
                  <FullRow><Small icon={<ArrayIcon />} label="Array" caret /></FullRow>
                </Stack>
                <Stack $indent>
                  <Row><Small icon={<EraseIcon />} /></Row>
                  <Row><Small icon={<ExplodeIcon />} /></Row>
                  <Row><Small icon={<OffsetIcon />} /></Row>
                </Stack>
              </PanelBody>
              <Footer label="Modify" />
            </Panel>
            <Panel $w={117}>
              <PanelBody $pad={1}>
                <Big w={31} icon={<TextIcon />} label="Text" caret />
                <Big w={44} icon={<DimensionIcon />} label="Dimension" />
                <Stack>
                  <Row><Small icon={<LinearIcon />} caret /></Row>
                  <Row><Small icon={<LeaderIcon />} caret /></Row>
                  <Row><Small icon={<TableIcon />} label="Table" /></Row>
                </Stack>
              </PanelBody>
              <Footer label="Annotation" />
            </Panel>
            <Panel $w={186}>
              <PanelBody $pad={2} $gap={1}>
                <Big w={39} icon={<LayerIcon />} label="Layer" sub="Properties" />
                <Stack $w={141}>
                  <Row>
                    <Combo $w={141}>
                      <BulbIcon /><SunIcon /><UnlockIcon />
                      <Svg w={9}><path d="M0 0H9V9H0Z" fill="#fff" stroke="none" /></Svg>
                      <select aria-label="Layer"><option>0</option></select>
                      <Caret />
                    </Combo>
                  </Row>
                  <LayerRow>
                    {["off", "iso", "freeze", "lock"].map((k) => <Small key={k} icon={<LayerToolIcon kind={k} />} />)}
                    <Small icon={<LayerToolIcon kind="current" />} label="Make Current" />
                  </LayerRow>
                  <LayerRow>
                    {["on", "walk", "thaw", "unlock"].map((k) => <Small key={k} icon={<LayerToolIcon kind={k} />} />)}
                    <Small icon={<LayerToolIcon kind="match" />} label="Match Layer" />
                  </LayerRow>
                </Stack>
              </PanelBody>
              <Footer label="Layers" />
            </Panel>
            <Panel $w={55}>
              <PanelBody $pad={0}>
                <Big w={29} icon={<InsertIcon />} label="Insert" caret />
                <Stack>
                  <Row><Small icon={<BlockToolIcon kind="create" />} /></Row>
                  <Row><Small icon={<BlockToolIcon kind="edit" />} /></Row>
                  <Row><Small icon={<BlockToolIcon kind="attr" />} caret /></Row>
                </Stack>
              </PanelBody>
              <Footer label="Block" />
            </Panel>
            <Panel $w={151}>
              <PanelBody $pad={1} $gap={1}>
                <Big w={40} icon={<MatchIcon />} label="Match" sub="Properties" />
                <Stack>
                  <PropertyRow><ColorWheelIcon /><PropertyCombo name="Color" mark={<Swatch />} /></PropertyRow>
                  <PropertyRow><WeightIcon /><PropertyCombo name="Lineweight" mark={<Stroke />} /></PropertyRow>
                  <PropertyRow><LinetypeIcon /><PropertyCombo name="Linetype" mark={<Stroke />} /></PropertyRow>
                </Stack>
              </PanelBody>
              <Footer label="Properties" />
            </Panel>
            <Panel $w={46}>
              <PanelBody $pad={1} $gap={1}>
                <Big w={28} icon={<GroupIcon />} label="Group" />
                <Stack>
                  <Row><Small icon={<GroupToolIcon kind="ungroup" />} /></Row>
                  <Row><Small icon={<GroupToolIcon kind="edit" />} /></Row>
                  <Row><Tool $active aria-label="Group selection"><GroupToolIcon kind="select" /></Tool></Row>
                </Stack>
              </PanelBody>
              <Footer label="Groups" />
            </Panel>
            <Panel $w={66}>
              <PanelBody $gap={3}>
                <Big w={42} icon={<MeasureIcon />} label="Measure" caret />
                <Stack>
                  <Row><Small icon={<QuickSelectIcon />} /></Row>
                  <Row><Small icon={<SelectAllIcon />} /></Row>
                  <Row><Small icon={<CalculatorIcon />} /></Row>
                </Stack>
              </PanelBody>
              <Footer label="Utilities" />
            </Panel>
            <Panel $w={53}>
              <PanelBody $gap={3}>
                <Big w={30} icon={<PasteIcon />} label="Paste" caret />
                <Stack>
                  <Row><Small icon={<CutIcon />} /></Row>
                  <Row><Small icon={<CopyClipIcon />} /></Row>
                </Stack>
              </PanelBody>
              <Footer label="Clipboard" plain />
            </Panel>
            <Panel $w={46}>
              <PanelBody $pad={8}>
                <Big w={30} icon={<BaseIcon />} label="Base" caret />
              </PanelBody>
              <Footer label="View" plain start />
            </Panel>
          </Ribbon>

          <DocTabs>
            <DocTab $w={84}>Start</DocTab>
            <DocTab $w={84} $active>
              Drawing1*
              <Svg w={7}><path d="M.5 .5L6.500 6.500M6.500 .5L.5 6.500" stroke="#b4b8bf" /></Svg>
            </DocTab>
            <AddTab aria-label="New drawing"><Plus /></AddTab>
          </DocTabs>

          <Canvas>
            <ViewLabel>[2D Wireframe]</ViewLabel>
            <ViewTools>
              <Svg w={18} h={14}>
                <path d="M1 7.500H8" stroke="#e6e7e8" strokeWidth="2" />
                <path d="M15 5.500H20V10H15ZM17 5V3H20" stroke="#e6e7e8" />
              </Svg>
              <svg width="65" height="90" viewBox="0 0 65 90" fontFamily="Liberation Sans" fontSize="12" fontWeight="700" fill="#c3c6c9" textAnchor="middle">
                <circle cx="40" cy="46" r="31.500" fill="none" stroke="#434950" strokeWidth="7" />
                <g transform="rotate(29 40 46)">
                  <path d="M25.500 31.500H54.500V60.500H25.500Z" fill="#b9bbbd" />
                  <path d="M31 37H49V55H31Z" fill="#a9b0b6" />
                  <text x="40" y="49" fontSize="8" fontWeight="400" fill="#2f353d">TOP</text>
                </g>
                <text x="40" y="18">N</text>
                <text x="40" y="83">S</text>
                <text x="8" y="50">W</text>
              </svg>
              <UcsMenu>Unnamed<Caret size={2} /></UcsMenu>
            </ViewTools>
            <CommandArea>
              <History $old>{"Specify origin of UCS or [Face/NAmed/OBject/Previous/View/World/X/Y/Z/ZAxis] <World>:"}</History>
              <History>{"Specify point on X-axis or <accept>:"}</History>
              <History>{"Specify point on the XY plane or <accept>:"}</History>
              <CommandRow>
                <CommandGrip>
                  <Svg w={4} h={12}><path d="M.5 0V12M3 0V12" strokeDasharray="1 1" stroke="#8d929a" /></Svg>
                  <Svg w={7}><path d="M.5 .5L6.500 6.500M6.500 .5L.5 6.500" strokeWidth="1.200" /></Svg>
                  <Svg w={14} h={12}><path d="M3 11L9 5" strokeWidth="2" /><path d="M12 1L9.500 3L10 5L12.500 4.500C13 7 9.500 8 8 5.500S9.500 1 12 1Z" fill={c.icon} stroke="none" /></Svg>
                </CommandGrip>
                <CommandBox>
                  <Svg w={12} h={9}><path d="M.5 .5H11.500V8.500H.5Z" stroke="#6a6d71" fill="#a9abad" /><path d="M0 1H12" stroke="#6a6d71" strokeWidth="2" /><path d="M2 4L4 5.500L2 7M5 7.500H7" stroke="#4a4d51" strokeWidth=".8" /></Svg>
                  <Caret size={2} />
                  <CommandInput aria-label="Command" placeholder="Type a command" />
                  <Caret size={2} up />
                </CommandBox>
              </CommandRow>
            </CommandArea>
            <Drawing fill="none">
              <path d="M268 144L708 395" stroke="#a6565a" />
              <path d="M708 395L727 406" stroke="#ead2d4" strokeWidth="1.300" />
              <path d="M553 0L337 380" stroke="#51a558" />
              <path d="M407 153L390 183L419 200" stroke="#b4b7bb" />
              <path d="M415.500 226.500H426.500V237.500H415.500Z" stroke="#b4b7bb" fill={c.canvas} />
              <g fill="#c4c7cb" fontFamily="Open Sans" fontSize="12" textAnchor="middle">
                <text x="411" y="151">Y</text>
                <text x="425" y="199">X</text>
              </g>
            </Drawing>
          </Canvas>

          <LayoutTabs>
            <LayoutTab $w={37} $active>Model</LayoutTab>
            <LayoutTab $w={43}>Layout1</LayoutTab>
            <LayoutTab $w={44}>Layout2</LayoutTab>
            <LayoutTab $w={18} aria-label="New layout"><Plus /></LayoutTab>
          </LayoutTabs>

          <StatusBar>
            <StatusGroup>
              <StatusButton $w={16} aria-label="Grid"><Svg w={11}><path d="M2.500 0V11M5.500 0V11M8.500 0V11M0 2.500H11M0 5.500H11M0 8.500H11" stroke="#b4b8bf" /></Svg></StatusButton>
              <StatusButton $w={16} aria-label="Snap"><Svg w={10}><path d="M0 1H10M0 4.500H10M0 8H10" strokeDasharray="2 2" strokeWidth="1.500" /></Svg></StatusButton>
              <StatusButton $w={12} aria-label="Snap settings"><Caret size={2} /></StatusButton>
            </StatusGroup>
            <StatusGroup>
              <StatusButton $w={16} aria-label="Dynamic input"><Svg w={12}><path d="M0 3.500H5M2.500 1V6" stroke="#a9aeb6" /><path d="M5 7H12V10H5Z" fill={c.icon} stroke="none" /></Svg></StatusButton>
              <StatusButton $w={17} aria-label="Ortho"><Svg w={12}><path d="M1.500 0V10.500H12M1.500 6.500H5.500V10.500" stroke="#8f959e" /></Svg></StatusButton>
              <StatusButton $w={16} $active aria-label="Polar tracking"><Svg w={12}><circle cx="5.500" cy="6.500" r="4.500" /><path d="M5.500 6.500L11 1M5.500 6.500H11" /></Svg></StatusButton>
              <StatusButton $w={12} aria-label="Polar settings"><Caret size={2} /></StatusButton>
              <StatusButton $w={16} $active aria-label="Object snap"><Svg w={12}><path d="M2.500 3.500H11V11.500H2.500Z" /><path d="M0 1H4V5H0Z" fill="#a9d2f5" stroke="none" /></Svg></StatusButton>
              <StatusButton $w={12} aria-label="Snap list"><Caret size={2} /></StatusButton>
              <StatusButton $w={17} aria-label="Lineweight"><Svg w={12}><path d="M0 2H11M0 4.500H5M0 7H5M0 10H5" /><path d="M5 5.500H11M5 9.500H11" strokeWidth="2" /></Svg></StatusButton>
              <StatusButton $w={16} $active aria-label="Transparency"><Svg w={12}>{checks.map(([x, y]) => <rect key={`${x}-${y}`} x={x * 2} y={y * 2} width="2" height="2" fill="#fff" stroke="none" />)}</Svg></StatusButton>
            </StatusGroup>
            <StatusGroup>
              <StatusButton $w={17} $active aria-label="Annotation visibility"><Svg w={12}><Person /><circle cx="9.500" cy="2.500" r="1.800" stroke="#b9dcf8" /></Svg></StatusButton>
              <StatusButton $w={17} aria-label="Auto scale"><Svg w={12}><Person /><path d="M9 1L11 3M11 1L9 3" /></Svg></StatusButton>
              <StatusButton $w={15} aria-label="Annotation scale icon"><Svg w={12}><Person /></Svg></StatusButton>
              <StatusButton $w={51}>1:1 / 100% <Caret size={2} /></StatusButton>
            </StatusGroup>
            <StatusGroup>
              <StatusButton $w={15} aria-label="Workspace"><Svg w={12}><circle cx="6" cy="6" r="3" strokeWidth="2" /><path d="M6 0V2M6 10V12M0 6H2M10 6H12M1.800 1.800L3 3M9 9L10.200 10.200M10.200 1.800L9 3M3 9L1.800 10.200" strokeWidth="2" /></Svg></StatusButton>
              <StatusButton $w={12} aria-label="Workspace list"><Caret size={2} /></StatusButton>
              <StatusButton $w={18} aria-label="Monitor"><Svg w={11}><path d="M5.500 0V11M0 5.500H11" strokeWidth="1.600" /></Svg></StatusButton>
            </StatusGroup>
            <StatusGroup>
              <StatusButton $w={15} aria-label="Units"><Svg w={8} h={12}><path d="M1 0H7V12H1Z" fill={c.icon} stroke="none" /><path d="M4 3H7M4 6H7M4 9H7" stroke="#343d4a" /></Svg></StatusButton>
              <StatusButton $w={53}>Decimal<span /><Caret size={2} /></StatusButton>
            </StatusGroup>
            <StatusGroup>
              <StatusButton $w={12} aria-label="Quick properties"><Svg w={8} h={12}><path d="M8 1.500H.5V11.500H8" /><path d="M3 6H8V10H3Z" fill="#9aa0a9" stroke="none" /></Svg></StatusButton>
            </StatusGroup>
          </StatusBar>
        </Window>
      </Page>
    </>
  );
}
